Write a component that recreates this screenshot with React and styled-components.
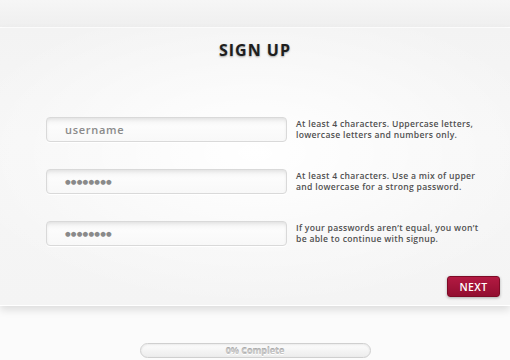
import React from 'react'
import styled, { createGlobalStyle } from 'styled-components'

const GlobalStyle = createGlobalStyle`
  html, body {
    margin: 0;
    padding: 0;
    background: #fbfbfb;
    font-family: "Open Sans", "DejaVu Sans", sans-serif;
  }
`

const Page = styled.div`
  width: 510px;
  height: 360px;
  overflow: hidden;
  display: flex;
  flex-direction: column;
  background: #fbfbfb;
`

const TopStrip = styled.div`
  height: 27px;
  background: linear-gradient(#f6f6f6, #efefef);
  border-bottom: 1px solid #ffffff;
`

const Panel = styled.section`
  height: 278px;
  box-sizing: border-box;
  padding: 12px 10px 8px 46px;
  display: flex;
  flex-direction: column;
  background:
    radial-gradient(ellipse 60% 55% at 50% 45%, #ffffff 0%, rgba(255,255,255,0) 100%),
    linear-gradient(#f3f3f3, #f6f6f6 40%, #f4f4f4);
  border-bottom: 1px solid #ffffff;
  box-shadow: 0 4px 8px rgba(0, 0, 0, 0.12);
  position: relative;
  z-index: 1;
`

const Title = styled.h1`
  margin: 0 0 0 -36px;
  font-size: 16px;
  line-height: 20px;
  font-weight: 700;
  letter-spacing: 1px;
  color: #1e1e1e;
  text-align: center;
  text-shadow: 0 1px 2px rgba(0, 0, 0, 0.35);
`

const Form = styled.div`
  margin-top: 57px;
  display: flex;
  flex-direction: column;
  gap: 27px;
`

const Row = styled.div`
  display: flex;
  align-items: center;
  gap: 9px;
`

const Field = styled.div`
  width: 241px;
  height: 25px;
  box-sizing: border-box;
  border: 1px solid #d9d9d9;
  border-radius: 4px;
  background: linear-gradient(#f2f2f2, #fcfcfc 35%, #f8f8f8);
  box-shadow: inset 0 2px 3px rgba(0, 0, 0, 0.06), 0 1px 0 #ffffff;
  display: flex;
  align-items: center;
  padding-left: 18px;
  font-family: ${p => (p.$secret ? '"DejaVu Sans", sans-serif' : '"Open Sans", sans-serif')};
  font-size: ${p => (p.$secret ? '6.5px' : '11px')};
  letter-spacing: ${p => (p.$secret ? '0.2px' : '0.7px')};
  color: #8a8a8a;
  font-weight: 600;
`

const Help = styled.p`
  margin: 0;
  font-size: 8.6px;
  line-height: 11px;
  font-weight: 600;
  color: #505050;
  letter-spacing: 0.3px;
`

const Footer = styled.div`
  margin-top: 30px;
  display: flex;
  justify-content: flex-end;
`

const NextButton = styled.button`
  width: 53px;
  height: 21px;
  border: 1px solid #7d0b26;
  border-radius: 3px;
  background: linear-gradient(#b31a42, #920e30);
  box-shadow: 0 1px 3px rgba(0, 0, 0, 0.3);
  color: #fff;
  font-family: "Open Sans", sans-serif;
  font-size: 10.5px;
  font-weight: 600;
  letter-spacing: 0.4px;
  padding: 0;
  cursor: pointer;
`

const Progress = styled.div`
  margin: 37px auto 0;
  width: 231px;
  height: 15px;
  box-sizing: border-box;
  border: 1px solid #cfcfcf;
  border-radius: 8px;
  background: linear-gradient(#fdfdfd, #ececec);
  box-shadow: inset 0 1px 2px rgba(0, 0, 0, 0.08);
  display: flex;
  align-items: center;
  justify-content: center;
  font-size: 9px;
  font-weight: 700;
  color: #c4c4c4;
  text-shadow: 0 1px 0 #fff, 0 -1px 0 #aaa;
`

const fields = [
  { value: 'username', help: ['At least 4 characters. Uppercase letters,', 'lowercase letters and numbers only.'] },
  { value: '●●●●●●●●', secret: true, help: ['At least 4 characters. Use a mix of upper', 'and lowercase for a strong password.'] },
  { value: '●●●●●●●●', secret: true, help: ['If your passwords aren\u2019t equal, you won\u2019t', 'be able to continue with signup.'] },
]

const App = () => {
  return <Page>
    <GlobalStyle />
    <TopStrip />
    <Panel>
      <Title>SIGN UP</Title>
      <Form>
        {fields.map((f, i) => (
          <Row key={i}>
            <Field $secret={f.secret}>{f.value}</Field>
            <Help>{f.help[0]}<br />{f.help[1]}</Help>
          </Row>
        ))}
      </Form>
      <Footer>
        <NextButton>NEXT</NextButton>
      </Footer>
    </Panel>
    <Progress>0% Complete</Progress>
  </Page>
}

export default App
